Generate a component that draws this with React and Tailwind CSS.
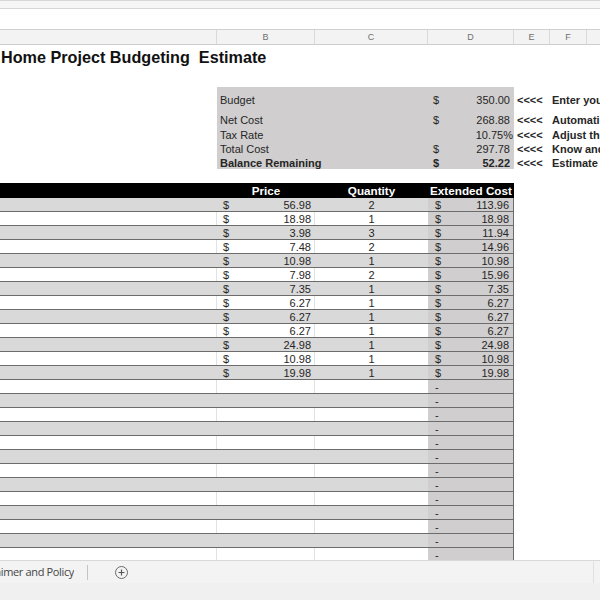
import React from "react";

const data = [
  ["56.98", "2", "113.96"],
  ["18.98", "1", "18.98"],
  ["3.98", "3", "11.94"],
  ["7.48", "2", "14.96"],
  ["10.98", "1", "10.98"],
  ["7.98", "2", "15.96"],
  ["7.35", "1", "7.35"],
  ["6.27", "1", "6.27"],
  ["6.27", "1", "6.27"],
  ["6.27", "1", "6.27"],
  ["24.98", "1", "24.98"],
  ["10.98", "1", "10.98"],
  ["19.98", "1", "19.98"],
];

const rows = [...data, ...Array.from({ length: 13 }, () => null)];

function TableRow({ row, gray }) {
  return (
    <div
      className={
        gray
          ? "flex h-[14px] shrink-0 border-b border-[#6c6c6c] bg-[#d9d9d9] leading-[15px]"
          : "flex h-[14px] shrink-0 border-b border-[#6c6c6c] bg-white leading-[15px]"
      }
    >
      <div
        className={
          gray
            ? "w-[217px] shrink-0 border-r border-[#d9d9d9]"
            : "w-[217px] shrink-0 border-r border-[#e2e2e2]"
        }
      />
      <div
        className={
          gray
            ? "flex w-[98px] shrink-0 justify-between border-r border-[#d9d9d9] pl-[6px] pr-[3px]"
            : "flex w-[98px] shrink-0 justify-between border-r border-[#e2e2e2] pl-[6px] pr-[3px]"
        }
      >
        {row && <span>$</span>}
        {row && <span>{row[0]}</span>}
      </div>
      <div className="w-[113px] shrink-0 text-center">{row && row[1]}</div>
      <div className="flex w-[86px] shrink-0 justify-between border-r border-[#6c6c6c] bg-[#d0cece] pl-[7px] pr-[4px]">
        <span>{row ? "$" : "-"}</span>
        {row && <span>{row[2]}</span>}
      </div>
    </div>
  );
}

function SummaryRow({ h, label, dollar, value, note, bold, pct }) {
  return (
    <div className={`flex ${h} items-center`}>
      <div className="w-[217px] shrink-0" />
      <div
        className={
          bold
            ? "flex h-full w-[297px] shrink-0 items-center bg-[#d0cece] pl-[3px] pr-[1px] pt-[1px] font-bold"
            : "flex h-full w-[297px] shrink-0 items-center bg-[#d0cece] pl-[3px] pr-[1px] pt-[1px]"
        }
      >
        <div className="w-[213px] shrink-0">{label}</div>
        <div className="w-[10px] shrink-0">{dollar ? "$" : ""}</div>
        <div className={pct ? "flex-1 text-right" : "flex-1 pr-[3px] text-right"}>{value}</div>
      </div>
      <div className="w-[36px] shrink-0 pl-[3px] pt-[1px] font-bold">&lt;&lt;&lt;&lt;</div>
      <div className="whitespace-nowrap pl-[2px] pt-[1px] font-bold">{note}</div>
    </div>
  );
}

export default function App() {
  const colHead = [
    ["w-[217px]", ""],
    ["w-[98px]", "B"],
    ["w-[113px]", "C"],
    ["w-[86px]", "D"],
    ["w-[36px]", "E"],
    ["w-[37px]", "F"],
  ];
  return (
    <div
      className="h-[600px] w-[600px] overflow-hidden bg-white text-[11px] text-[#262626]"
      style={{ fontFamily: '"Liberation Sans", Arial, sans-serif' }}
    >
      <div className="flex h-[560px] flex-col overflow-hidden">
        <div className="h-[9px] shrink-0 border-b border-t border-[#d6d6d6] bg-[#f6f6f6]" />
        <div className="h-[20px] shrink-0 bg-white" />
        <div className="flex h-[16px] shrink-0 border-b border-t border-[#cfcfcf] bg-[#f3f3f3] text-[9px] leading-[14px] text-[#707070]">
          {colHead.map(([w, l], i) => (
            <div key={i} className={`${w} shrink-0 border-r border-[#dadada] text-center`}>
              {l}
            </div>
          ))}
          <div className="flex-1" />
        </div>
        <div className="h-[42px] shrink-0 pl-[1px] pt-[2px]">
          <div className="text-[16.2px] font-bold leading-[20px] text-[#111]">
            Home Project Budgeting&nbsp; Estimate
          </div>
        </div>
        <div className="flex shrink-0 flex-col">
          <SummaryRow h="h-[25px]" label="Budget" dollar value="350.00" note="Enter your budget" />
          <SummaryRow h="h-[15px]" label="Net Cost" dollar value="268.88" note="Automatically calculated" />
          <SummaryRow h="h-[15px]" label="Tax Rate" value="10.75%" note="Adjust the tax rate" pct />
          <SummaryRow h="h-[14px]" label="Total Cost" dollar value="297.78" note="Know and plan" />
          <SummaryRow h="h-[13px]" label="Balance Remaining" dollar value="52.22" note="Estimate remaining" bold />
        </div>
        <div className="h-[14px] shrink-0" />
        <div className="flex h-[15px] w-[514px] shrink-0 bg-black text-[11.7px] font-bold leading-[15px] text-white">
          <div className="w-[217px] shrink-0" />
          <div className="w-[98px] shrink-0 text-center">Price</div>
          <div className="w-[113px] shrink-0 text-center">Quantity</div>
          <div className="w-[86px] shrink-0 text-center">Extended Cost</div>
        </div>
        <div className="flex w-[514px] flex-col">
          {rows.map((r, i) => (
            <TableRow key={i} row={r} gray={i % 2 === 0} />
          ))}
        </div>
      </div>
      <div className="flex h-[23px] items-center border-t border-[#d8d8d8] bg-[#f3f3f3]">
        <div
          className="flex w-[74px] shrink-0 justify-end overflow-hidden whitespace-nowrap text-[11px] tracking-[-0.35px] text-[#444]"
          style={{ fontFamily: '"Open Sans", "Noto Sans", sans-serif' }}
        >
          Disclaimer and Policy
        </div>
        <div className="ml-[13px] h-[15px] w-px shrink-0 bg-[#c4c4c4]" />
        <div className="ml-[27px] flex h-[13px] w-[13px] shrink-0 items-center justify-center rounded-full border border-[#6a6a6a]">
          <svg width="7" height="7" viewBox="0 0 7 7">
            <path d="M3.5 0.5v6M0.5 3.5h6" stroke="#555" strokeWidth="1.2" />
          </svg>
        </div>
        <div className="flex-1" />
        <div className="mr-[6px] h-[21px] w-px bg-[#e0e0e0]" />
      </div>
      <div className="h-[17px] bg-[#f0f0f0]" />
    </div>
  );
}
